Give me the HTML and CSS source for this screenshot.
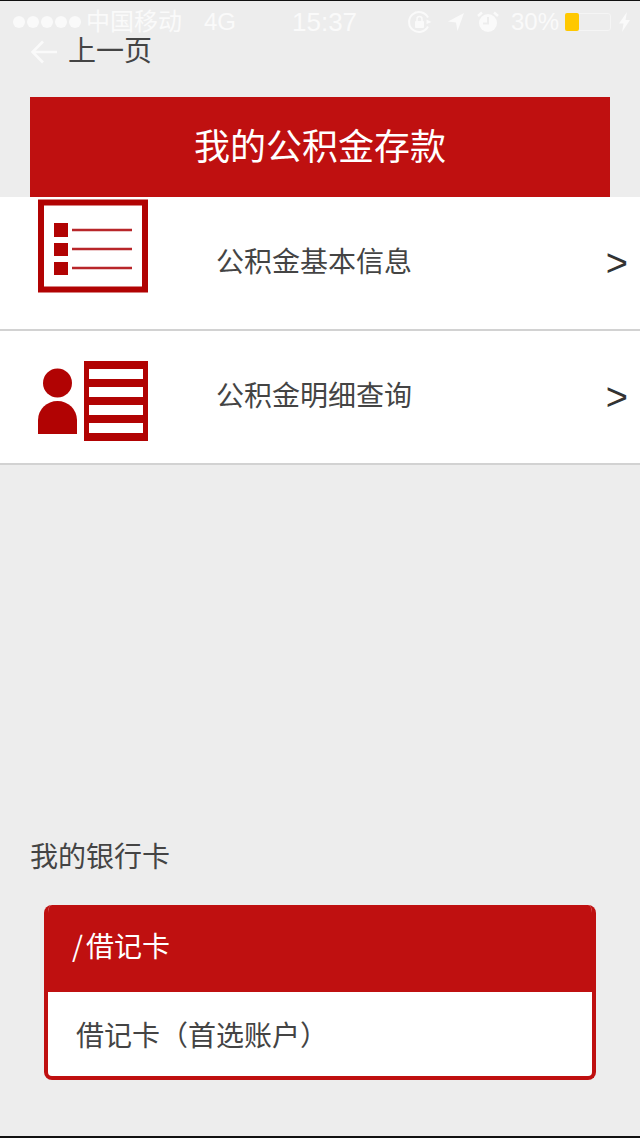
FILE: index.html
```html
<!DOCTYPE html>
<html lang="zh-CN">
<head>
    <meta charset="UTF-8">
    <meta name="viewport" content="width=device-width, initial-scale=1.0">
    <title>我的公积金存款</title>
    <link rel="stylesheet" href="styles.css">
</head>
<body>
    <div class="page">
        <div class="status-bar">
            <div class="status-left">
                <span class="signal"><i></i><i></i><i></i><i></i><i></i></span>
                <span class="carrier">中国移动</span>
                <span class="network">4G</span>
            </div>
            <div class="status-time">15:37</div>
            <div class="status-right">
                <svg class="ic-lock" width="26" height="24" viewBox="0 0 26 24">
                    <path d="M21 7.500A10 10 0 1 0 21 16.500" fill="none" stroke="#fafafa" stroke-width="2"/>
                    <path d="M19.500 9.500L24.500 12L19.500 14Z" fill="#fafafa"/>
                    <rect x="8" y="11" width="9" height="7" rx="1" fill="#fafafa"/>
                    <path d="M10 11V9a2.500 2.500 0 0 1 5 0v2" fill="none" stroke="#fafafa" stroke-width="1.500"/>
                </svg>
                <svg class="ic-loc" width="18" height="20" viewBox="0 0 18 20">
                    <path d="M17 1L1 9.500L9 10.500L10.500 19Z" fill="#fafafa"/>
                </svg>
                <svg class="ic-alarm" width="22" height="22" viewBox="0 0 22 22">
                    <circle cx="11" cy="12" r="9" fill="#fafafa"/>
                    <path d="M11 6V12.500H6" fill="none" stroke="#ededed" stroke-width="2"/>
                    <path d="M1 5L5 1.500M21 5L17 1.500" stroke="#fafafa" stroke-width="2.500"/>
                </svg>
                <span class="battery-text">30%</span>
                <span class="battery"><span class="battery-fill"></span></span>
                <svg class="ic-bolt" width="11" height="20" viewBox="0 0 11 20">
                    <path d="M8 0L0 11.500H4.500L3 20L11 8H6.500Z" fill="#fafafa"/>
                </svg>
            </div>
        </div>

        <div class="back-row">
            <svg width="27" height="24" viewBox="0 0 27 24">
                <path d="M13 1.500L2.500 12L13 22.500M2.500 12H27" fill="none" stroke="#fafafa" stroke-width="2.500"/>
            </svg>
            <span class="back-text">上一页</span>
        </div>

        <h1 class="title-band">我的公积金存款</h1>

        <div class="menu-row">
            <svg class="menu-icon icon-info" width="110" height="94" viewBox="0 0 110 94">
                <rect x="3" y="3.500" width="104" height="87" fill="none" stroke="#b10303" stroke-width="6"/>
                <rect x="16" y="24" width="14" height="14" fill="#b10303"/>
                <rect x="16" y="44" width="14" height="13" fill="#b10303"/>
                <rect x="16" y="63" width="14" height="13" fill="#b10303"/>
                <path d="M34 31H94M34 50H94M34 69H94" stroke="#b8262a" stroke-width="2.500"/>
            </svg>
            <span class="menu-text">公积金基本信息</span>
            <span class="menu-arrow">&gt;</span>
        </div>
        <div class="menu-row">
            <svg class="menu-icon icon-detail" width="110" height="80" viewBox="0 0 110 80">
                <circle cx="19.500" cy="22" r="14.500" fill="#b10303"/>
                <path d="M0 73V59a19.500 19 0 0 1 39 0V73Z" fill="#b10303"/>
                <rect x="46" y="0" width="64" height="80" fill="#b10303"/>
                <rect x="51" y="8" width="54" height="10" fill="#fff"/>
                <rect x="51" y="26" width="54" height="10" fill="#fff"/>
                <rect x="51" y="44" width="54" height="10" fill="#fff"/>
                <rect x="51" y="62" width="54" height="10" fill="#fff"/>
            </svg>
            <span class="menu-text">公积金明细查询</span>
            <span class="menu-arrow">&gt;</span>
        </div>

        <div class="spacer"></div>

        <div class="section-title">我的银行卡</div>
        <div class="bank-card">
            <div class="bank-head"><span class="slash">/</span>借记卡</div>
            <div class="bank-body">借记卡（首选账户）</div>
        </div>
    </div>
</body>
</html>
```

FILE: styles.css
```css
* {
    box-sizing: border-box;
}

body {
    margin: 0;
    background-color: #ededed;
    font-family: "Noto Sans CJK SC", "Liberation Sans", sans-serif;
    color: #444;
}

.page {
    height: 1138px;
    display: flex;
    flex-direction: column;
    border-top: 1px solid #111;
    border-bottom: 2px solid #111;
    overflow: hidden;
}

.status-bar {
    height: 38px;
    display: flex;
    align-items: center;
    justify-content: space-between;
    position: relative;
    padding: 4px 10px 0 13px;
    color: #fafafa;
    font-family: "Liberation Sans", "Noto Sans CJK SC", sans-serif;
    font-size: 24px;
    line-height: 24px;
}

.status-left,
.status-right {
    display: flex;
    align-items: center;
}

.signal {
    display: flex;
    gap: 2px;
    margin-right: 5px;
}

.signal i {
    width: 12px;
    height: 12px;
    border-radius: 50%;
    background-color: #fafafa;
}

.network {
    margin-left: 22px;
}

.status-time {
    position: absolute;
    left: 292px;
    top: 3px;
    line-height: 36px;
    font-size: 26px;
}

.ic-loc {
    margin-left: 14px;
}

.ic-alarm {
    margin-left: 12px;
}

.battery-text {
    margin-left: 12px;
}

.battery {
    width: 46px;
    height: 18px;
    margin-left: 6px;
    border: 1px solid #f5f5f5;
    border-radius: 3px;
    display: block;
}

.battery-fill {
    display: block;
    width: 14px;
    height: 18px;
    margin: -1px 0 0 -1px;
    border-radius: 2px;
    background-color: #ffc800;
}

.ic-bolt {
    margin-left: 8px;
}

.back-row {
    height: 26px;
    padding-left: 30px;
    display: flex;
    align-items: center;
}

.back-text {
    margin-left: 11px;
    font-family: "Liberation Sans", "Noto Sans CJK SC", sans-serif;
    font-size: 28px;
    line-height: 26px;
    color: #444;
}

.title-band {
    margin: 32px 30px 0;
    height: 100px;
    padding-bottom: 7px;
    background-color: #bf1010;
    color: #fff;
    font-size: 36px;
    font-weight: normal;
    display: flex;
    align-items: center;
    justify-content: center;
}

.menu-row {
    height: 134px;
    background-color: #fff;
    border-bottom: 2px solid #d2d2d2;
    display: flex;
    align-items: center;
    padding: 0 12px 0 38px;
}

.menu-icon {
    flex: none;
    align-self: flex-start;
}

.icon-info {
    margin-top: 2px;
}

.icon-detail {
    margin-top: 30px;
}

.menu-text {
    margin: 0 0 6px 68px;
    font-size: 28px;
    color: #444;
}

.menu-arrow {
    margin-left: auto;
    font-family: "Liberation Sans", sans-serif;
    font-size: 38px;
    color: #333;
}

.spacer {
    flex: 1;
}

.section-title {
    padding-left: 30px;
    font-size: 28px;
    line-height: 40px;
    color: #444;
}

.bank-card {
    margin: 30px 44px 56px;
    height: 175px;
    background-color: #fff;
    border: 4px solid #bf1010;
    border-top: none;
    border-radius: 8px;
    overflow: hidden;
}

.bank-head {
    height: 87px;
    margin: 0 -4px;
    padding-left: 28px;
    background-color: #bf1010;
    color: #fff;
    font-size: 28px;
    line-height: 80px;
}

.slash {
    margin-right: 3px;
}

.bank-body {
    padding-left: 28px;
    font-size: 28px;
    line-height: 84px;
    color: #444;
}
```
